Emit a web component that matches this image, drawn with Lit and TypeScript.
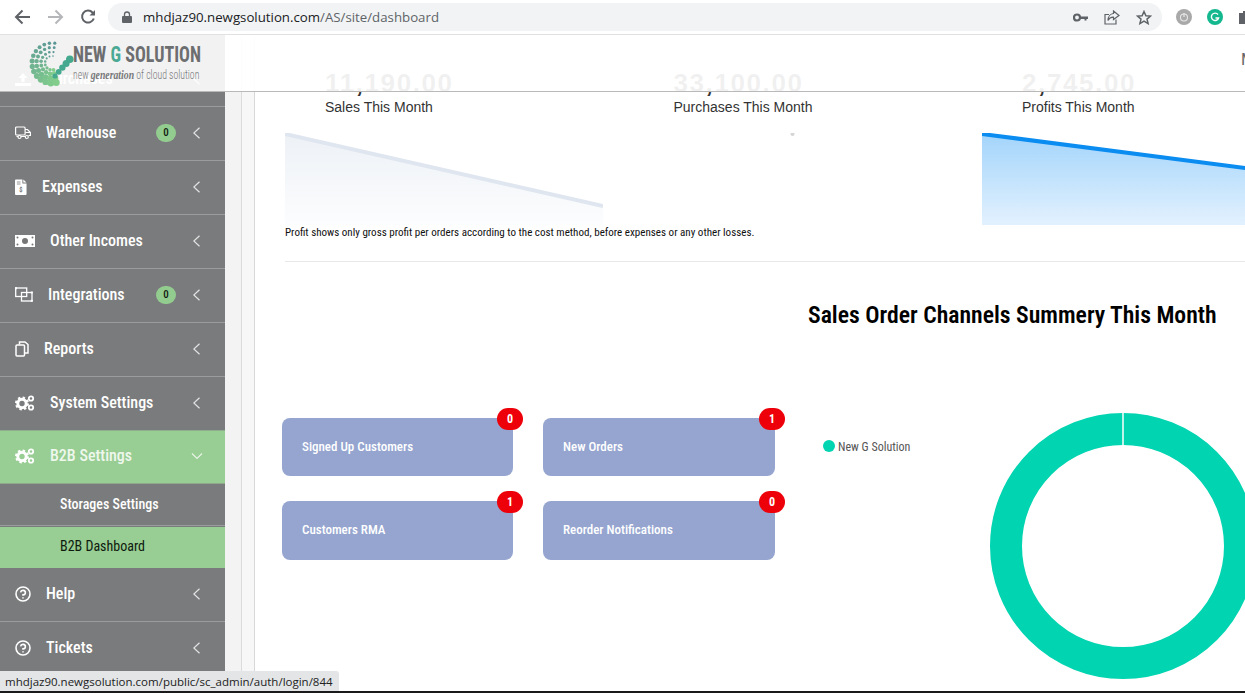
import { LitElement, html, css, svg } from "lit";
import { customElement } from "lit/decorators.js";

const icons: Record<string, any> = {
  upload: html`<svg width="16" height="14" viewBox="0 0 16 14"><path d="M8 1 3.5 6H6.5V10H9.500V6H12.500ZM0 11H16V14H0Z" fill="#fff"/></svg>`,
  truck: html`<svg width="16" height="14" viewBox="0 0 16 14" fill="none" stroke="#fff" stroke-width="1.200"><rect x=".6" y="1" width="9.500" height="8" rx="1"/><path d="M10 3.500H12.500L15.400 6.500V9.500H13.500M10.500 6.500H15M3 10.500H1.500M6 10.500H10"/><circle cx="4.500" cy="11" r="1.500"/><circle cx="11.800" cy="11" r="1.500"/></svg>`,
  file: html`<svg width="12" height="16" viewBox="0 0 13 16" preserveAspectRatio="none"><path d="M0 1.500A1 1 0 0 1 1 .5H8V4.500H12.500V15A1 1 0 0 1 11.500 16H1A1 1 0 0 1 0 15Z M9 .5 12.500 3.500H9Z" fill="#fff"/><path d="M2 3H6M2 5H6" stroke="#777" stroke-width=".8"/><text x="6.300" y="13" font-size="7" font-family="Roboto" font-weight="700" fill="#777" text-anchor="middle">$</text></svg>`,
  money: html`<svg width="20" height="12" viewBox="0 0 20 12"><rect width="20" height="12" fill="#fff"/><circle cx="10" cy="6" r="3" fill="#777"/><circle cx="2.500" cy="2.500" r="1" fill="#777"/><circle cx="17.500" cy="2.500" r="1" fill="#777"/><circle cx="2.500" cy="9.500" r="1" fill="#777"/><circle cx="17.500" cy="9.500" r="1" fill="#777"/></svg>`,
  object: html`<svg width="18" height="15" viewBox="0 0 18 15" fill="none" stroke="#fff" stroke-width="1.300"><rect x=".7" y="1" width="11" height="8.500"/><rect x="6.500" y="5.500" width="10.500" height="8.500"/><rect x="0" y=".2" width="2" height="2" fill="#fff" stroke="none"/><rect x="15.800" y="12.800" width="2" height="2" fill="#fff" stroke="none"/><rect x="15.800" y="4.500" width="2" height="2" fill="#fff" stroke="none"/></svg>`,
  copy: html`<svg width="14" height="16" viewBox="0 0 14 16" fill="none" stroke="#fff" stroke-width="1.500"><path d="M4.500 3.500V1H10L13 3.500V12H9.500"/><rect x="1" y="4" width="8.500" height="11" rx="1"/></svg>`,
  cogs: html`<svg width="20" height="16" viewBox="0 0 20 16" fill="none" stroke="#fff"><circle cx="7" cy="8.500" r="4.200" stroke-width="3"/><circle cx="7" cy="8.500" r="6" stroke-width="2" stroke-dasharray="2.400 2.300"/><circle cx="16" cy="3.500" r="2.200" stroke-width="1.800"/><circle cx="16" cy="12.500" r="2.200" stroke-width="1.800"/></svg>`,
  help: html`<svg width="16" height="16" viewBox="0 0 16 16" fill="none" stroke="#fff" stroke-width="1.600"><circle cx="8" cy="8" r="7"/><path d="M5.600 6.300A2.400 2.200 0 1 1 8 8.800V9.800"/><path d="M8 11.200V12.500"/></svg>`,
};

const logoDots = () => {
  const out: any[] = [];
  const rings = [[7, 1.700, 8], [11, 2.300, 10], [15.500, 2.800, 12], [20, 3.200, 14]];
  const cx = 52, cy = 32;
  for (const [r, s, n] of rings) {
    for (let i = 0; i < n; i++) {
      const t = i / (n - 1);
      const a = ((-82 - t * 200) * Math.PI) / 180;
      const x = cx + r * Math.cos(a);
      const y = cy + r * Math.sin(a);
      const g = Math.round(150 + t * 55);
      out.push(svg`<circle cx=${x.toFixed(1)} cy=${y.toFixed(1)} r=${(s * (0.5 + t * 0.6)).toFixed(1)} fill=${`rgb(${90 + t * 40},${g},${150 - t * 10})`}/>`);
    }
  }
  for (let i = 0; i < 5; i++) {
    out.push(svg`<circle cx=${55 + i * 3.700} cy=${45 - i * 4.200} r=${2.600 + i * 0.300} fill="#45a98f"/>`);
  }
  return out;
};

@customElement("app-root")
export class AppRoot extends LitElement {
  static styles = css`
    :host { display: flex; flex-direction: column; width: 1245px; height: 693px; overflow: hidden; background: #fff; font-family: "Liberation Sans", Arial, sans-serif; }
    .toolbar { display: flex; align-items: center; height: 34px; flex: none; background: #fff; border-bottom: 1px solid #dfe1e3; position: relative; z-index: 3; box-sizing: content-box; }
    .nav { display: flex; align-items: center; gap: 16px; padding-left: 14px; width: 108px; flex: none; box-sizing: border-box; }
    .pill { flex: none; width: 1054px; height: 28px; border-radius: 14px; background: #f1f3f4; display: flex; align-items: center; padding: 0 10px 0 14px; box-sizing: border-box; }
    .url { font-family: "Open Sans", sans-serif; font-size: 13.250px; color: #202124; margin-left: 11px; flex: 1; white-space: nowrap; }
    .url span { color: #5f6368; }
    .pillicons { display: flex; align-items: center; gap: 16px; }
    .ext { display: flex; align-items: center; gap: 15px; padding-left: 14px; flex: none; }
    .body { flex: 1; min-height: 0; display: flex; position: relative; overflow: hidden; }
    .sidebar { width: 225px; flex: none; background: #7a7b7c; padding-top: 18px; box-sizing: border-box; overflow: hidden; }
    .item { height: 54px; box-sizing: border-box; border-bottom: 1px solid #9b9c9d; display: flex; align-items: center; padding: 0 25px 2px 15px; color: #fff; font-family: Roboto, sans-serif; font-stretch: 75%; font-size: 16px; font-weight: 500; }
    .item.tight { height: 53px; border-bottom: none; }
    .item > svg:first-child { margin-right: 15px; flex: none; }
    .item .lab { display: inline-block; white-space: nowrap; }
    .item.open { background: #98cd93; color: #eef7ec; border-bottom: 1px solid #8fa98d; border-top: 1px solid #8fae8b; padding-bottom: 3px; }
    .item.open .chev { margin-right: -3px; }
    .badge { margin-left: auto; width: 20px; height: 18px; border-radius: 9px; background: #93cc8f; color: #102010; font-size: 11px; font-weight: 500; display: flex; align-items: center; justify-content: center; margin-right: 17px; }
    .chev { margin-left: auto; flex: none; }
    .badge + .chev { margin-left: 0; }
    .sub { height: 42px; box-sizing: border-box; display: flex; align-items: center; padding: 0 0 2px 60px; color: #fff; font-family: Roboto, sans-serif; font-stretch: 75%; font-size: 14px; font-weight: 500; border-bottom: 1px solid #9b9c9d; }
    .sub.active { background: #98cd93; color: #0e1a0e; font-weight: 400; height: 41px; border: none; margin-top: 1px; padding-bottom: 3px; }
    .gutter { width: 30px; flex: none; display: flex; }
    .g1 { width: 16px; background: #f3f3f3; border-right: 1px solid #dcdcdc; }
    .g2 { flex: 1; background: #f7f7f7; border-right: 1px solid #d8d8d8; }
    .main { flex: 1; min-width: 0; overflow: hidden; padding-left: 30px; }
    .ghost { font-size: 18px; font-weight: 700; color: #000; line-height: 20px; margin: -17px 0 0 -15px; height: 20px; }
    .stats { display: grid; grid-template-columns: repeat(3, 348.500px); width: 1046px; margin-top: 29px; }
    .num { font-size: 26px; font-weight: 700; color: #333; line-height: 32px; padding-left: 40px; letter-spacing: 1.600px; }
    .lbl { font-size: 14px; color: #333; line-height: 18px; padding-left: 40px; margin-top: -1px; }
    .chart { display: block; margin-top: 17px; }
    .note { font-size: 11.050px; color: #111; line-height: 14px; margin-top: 1px; white-space: nowrap; font-family: Roboto, sans-serif; font-stretch: 75%; }
    .rule { border-top: 1px solid #e8e8e8; margin-top: 21px; width: 1000px; }
    .lower { display: flex; width: 1000px; margin-left: -3px; }
    .left { width: 526px; flex: none; padding-top: 156px; }
    .cards { display: grid; grid-template-columns: 231px 232px; grid-template-rows: 58px 59px; gap: 25px 30px; }
    .card { position: relative; background: #95a5cf; border-radius: 8px; color: #fff; display: flex; align-items: center; padding: 0 0 2px 20px; font-family: Roboto, sans-serif; font-stretch: 75%; font-size: 13px; font-weight: 500; }
    .cnt { position: absolute; top: -10px; right: -10px; width: 26px; height: 22px; border-radius: 11px; background: #ed0009; color: #fff; font-size: 12px; font-weight: 700; display: flex; align-items: center; justify-content: center; }
    .right { width: 470px; flex: none; }
    h2 { margin: 38px 0 0; font-family: Roboto, sans-serif; font-stretch: 75%; font-size: 23.700px; font-weight: 600; color: #000; line-height: 30px; white-space: nowrap; }
    .pie { display: flex; margin-top: 82px; }
    .legend { width: 181px; flex: none; display: flex; align-items: flex-start; padding-left: 15px; box-sizing: border-box; font-family: Roboto, sans-serif; font-stretch: 75%; font-size: 12px; color: #555; line-height: 14px; margin-top: 28px; }
    .dot { width: 12px; height: 12px; border-radius: 50%; background: #00d4b0; margin-right: 3px; flex: none; }
    .donut { display: block; flex: none; }
    .header { position: absolute; left: 0; top: 0; right: 0; height: 57px; box-sizing: border-box; border-bottom: 1px solid #b9b9b9; display: flex; align-items: flex-start; z-index: 2; }
    .logo { width: 225px; height: 100%; flex: none; display: flex; align-items: flex-start; padding-left: 28px; box-sizing: border-box; background: rgba(255,255,255,.9); }
    .logo svg { flex: none; margin-right: -1px; }
    .brand { padding-top: 7px; white-space: nowrap; transform: scaleX(.8); transform-origin: left top; }
    .b1 { font-family: Roboto, sans-serif; font-stretch: 75%; font-size: 22.500px; font-weight: 700; color: #6d6e70; line-height: 24px; }
    .b1 span { color: #4aa994; }
    .b2 { font-family: Roboto, sans-serif; font-stretch: 75%; font-size: 12.200px; font-weight: 300; color: #77787a; line-height: 14px; margin-top: 2px; }
    .b2 i { font-family: "Liberation Serif", serif; font-weight: 700; }
    .hright { flex: 1; height: 100%; background: rgba(255,255,255,.93); display: flex; justify-content: flex-end; }
    .user { margin-right: -10px; padding-top: 15px; font-size: 16px; color: #666; font-family: Roboto, sans-serif; }
    .status { position: absolute; left: 0; bottom: 0; height: 20px; padding: 0 6px 0 5px; border-top-right-radius: 3px; background: #e3e5e7; display: flex; align-items: center; color: #222; font-family: "Open Sans", sans-serif; font-size: 11.500px; white-space: nowrap; z-index: 3; }
    .blackline { height: 2px; background: #1a1a1a; flex: none; }
  `;

  private row(icon: string, label: string, badge = false, tight = false) {
    return html`<div class="item ${tight ? "tight" : ""}">${icons[icon]}<span class="lab">${label}</span>${badge ? html`<span class="badge">0</span>` : ""}${this.chev()}</div>`;
  }
  private chev() {
    return html`<svg class="chev" width="7" height="12" viewBox="0 0 7 12" fill="none" stroke="#e4e4e4" stroke-width="1.200"><path d="M6.500 .8 .8 6 6.500 11.200"/></svg>`;
  }

  render() {
    return html`
      <div class="toolbar">
        <div class="nav">
          <svg width="17" height="16" viewBox="0 0 17 16" fill="none" stroke="#5f6368" stroke-width="2"><path d="M16 8H2M8.500 1.500 2 8l6.500 6.500"/></svg>
          <svg width="17" height="16" viewBox="0 0 17 16" fill="none" stroke="#b4b6b9" stroke-width="2"><path d="M1 8H15M8.500 1.500 15 8l-6.500 6.500"/></svg>
          <svg width="16" height="16" viewBox="0 0 16 16" fill="none" stroke="#5f6368" stroke-width="2"><path d="M13.800 9.500A6 6 0 1 1 12.500 3.500L14.500 5.500"/><path d="M15 1v5.500H9.500" fill="#5f6368" stroke="none"/></svg>
        </div>
        <div class="pill">
          <svg width="10" height="12" viewBox="0 0 10 12"><path d="M2.500 5V3.500a2.500 2.500 0 0 1 5 0V5" fill="none" stroke="#5f6368" stroke-width="1.300"/><rect y="5" width="10" height="7" rx="1" fill="#5f6368"/></svg>
          <div class="url">mhdjaz90.newgsolution.com<span>/AS/site/dashboard</span></div>
          <div class="pillicons">
            <svg width="15" height="9" viewBox="0 0 15 9"><circle cx="4" cy="4.500" r="3" fill="none" stroke="#5f6368" stroke-width="2.200"/><path d="M6 3.500H15V6H13.500V7.500H11.500V6H6Z" fill="#5f6368"/></svg>
            <svg width="16" height="15" viewBox="0 0 16 15" fill="none" stroke="#5f6368" stroke-width="1.200"><path d="M12 9.500V14H1V4.500H5"/><path d="M9.500 1 15 5.500 9.500 9.500V7.200C7 7 5 8.500 4 10.500 4 6.500 6.500 3.800 9.500 3.500Z"/></svg>
            <svg width="16" height="15" viewBox="0 0 16 15" fill="none" stroke="#5f6368" stroke-width="1.500"><path d="M8 1.500 9.900 5.700 14.500 6.100 11 9.100 12.100 13.600 8 11.200 3.900 13.600 5 9.100 1.500 6.100 6.100 5.700Z"/></svg>
          </div>
        </div>
        <div class="ext">
          <svg width="16" height="16" viewBox="0 0 16 16"><circle cx="8" cy="8" r="8" fill="#a9a9a9"/><circle cx="8" cy="8.500" r="3.500" fill="none" stroke="#e6e6e6" stroke-width="1.100"/><path d="M8 4v4" stroke="#e6e6e6" stroke-width="1.200"/></svg>
          <svg width="16" height="16" viewBox="0 0 16 16"><circle cx="8" cy="8" r="8" fill="#14b88f"/><path d="M11 5.500A3.700 3.700 0 1 0 11.600 9H8.500" fill="none" stroke="#fff" stroke-width="1.400"/></svg>
          <svg width="16" height="16" viewBox="0 0 16 16"><path d="M1 4H5V2H8V4H12V8H14V11H12V15H1Z" fill="#5f6368"/></svg>
        </div>
      </div>
      <div class="body">
        <nav class="sidebar">
          ${this.row("upload", "Purchases")}
          ${this.row("truck", "Warehouse", true)}
          ${this.row("file", "Expenses")}
          ${this.row("money", "Other Incomes")}
          ${this.row("object", "Integrations", true)}
          ${this.row("copy", "Reports")}
          ${this.row("cogs", "System Settings", false, true)}
          <div class="item open">${icons.cogs}<span class="lab">B2B Settings</span>
            <svg class="chev" width="12" height="8" viewBox="0 0 12 8" fill="none" stroke="#e8f3e6" stroke-width="1.200"><path d="M1 1.500 6 6.500 11 1.500"/></svg>
          </div>
          <div class="sub">Storages Settings</div>
          <div class="sub active">B2B Dashboard</div>
          ${this.row("help", "Help")}
          ${this.row("help", "Tickets")}
        </nav>
        <div class="gutter"><div class="g1"></div><div class="g2"></div></div>
        <main class="main">
          <div class="ghost">Statistics</div>
          <div class="stats">
            <div>
              <div class="num">11,190.00</div>
              <div class="lbl">Sales This Month</div>
              <svg class="chart" width="318" height="92" viewBox="0 0 318 92">
                <defs><linearGradient id="g1" x1="0" y1="0" x2="0" y2="1"><stop offset="0" stop-color="#edf1f6"/><stop offset="1" stop-color="#fcfdfe"/></linearGradient></defs>
                <path d="M0 0 318 72V92H0Z" fill="url(#g1)"/>
                <path d="M0 1 318 73" stroke="#dfe6ef" stroke-width="4"/>
              </svg>
            </div>
            <div>
              <div class="num">33,100.00</div>
              <div class="lbl">Purchases This Month</div>
              <svg class="chart" width="318" height="92" viewBox="0 0 318 92"><circle cx="158.500" cy="1" r="2" fill="#d5d5d5"/></svg>
            </div>
            <div>
              <div class="num">2,745.00</div>
              <div class="lbl">Profits This Month</div>
              <svg class="chart" width="318" height="92" viewBox="0 0 318 92">
                <defs><linearGradient id="g2" x1="0" y1="0" x2="0" y2="1"><stop offset="0" stop-color="#a2d4fb"/><stop offset="1" stop-color="#e3f1fe"/></linearGradient></defs>
                <path d="M0 0 318 41V92H0Z" fill="url(#g2)"/>
                <path d="M0 1 318 42" stroke="#0a8cf0" stroke-width="4"/>
              </svg>
            </div>
          </div>
          <div class="note">Profit shows only gross profit per orders according to the cost method, before expenses or any other losses.</div>
          <div class="rule"></div>
          <div class="lower">
            <div class="left">
              <div class="cards">
                <div class="card">Signed Up Customers<span class="cnt">0</span></div>
                <div class="card">New Orders<span class="cnt">1</span></div>
                <div class="card">Customers RMA<span class="cnt">1</span></div>
                <div class="card">Reorder Notifications<span class="cnt">0</span></div>
              </div>
            </div>
            <div class="right">
              <h2>Sales Order Channels Summery This Month</h2>
              <div class="pie">
                <div class="legend"><span class="dot"></span><span>New G Solution</span></div>
                <svg class="donut" width="268" height="268" viewBox="0 0 268 268">
                  <circle cx="134" cy="134" r="117" fill="none" stroke="#00d4b0" stroke-width="32"/>
                  <path d="M134 0V34" stroke="#fff" stroke-width="1.500"/>
                </svg>
              </div>
            </div>
          </div>
        </main>
        <header class="header">
          <div class="logo">
            <svg width="46" height="52" viewBox="28 4 46 52">${logoDots()}</svg>
            <div class="brand">
              <div class="b1">NEW <span>G</span> SOLUTION</div>
              <div class="b2">new <i>generation</i> of cloud solution</div>
            </div>
          </div>
          <div class="hright"><div class="user">M</div></div>
        </header>
        <div class="status">mhdjaz90.newgsolution.com/public/sc_admin/auth/login/844</div>
      </div>
      <div class="blackline"></div>
    `;
  }
}
